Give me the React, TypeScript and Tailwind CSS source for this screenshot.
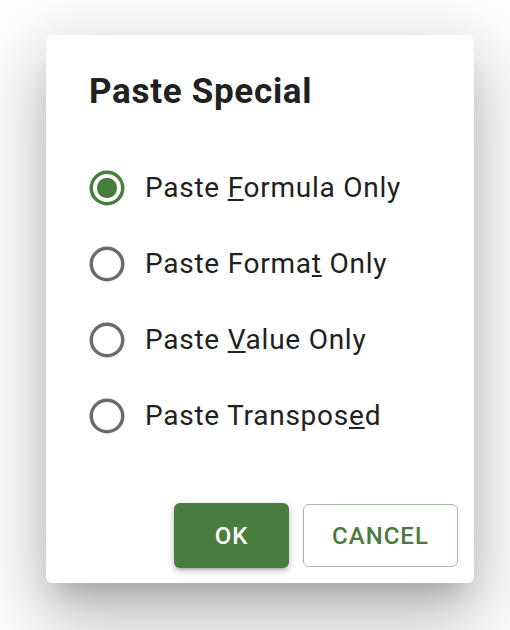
import React from "react";

const GREEN = "#477d3d";

function RadioIcon({ checked }: { checked: boolean }) {
  return (
    <svg width="42" height="42" viewBox="0 0 24 24" className="shrink-0">
      <circle cx="12" cy="12" r="9" fill="none" stroke={checked ? GREEN : "#6b6b6b"} strokeWidth="2" />
      {checked && <circle cx="12" cy="12" r="5.8" fill={GREEN} />}
    </svg>
  );
}

function U({ children }: { children: React.ReactNode }) {
  return <span className="underline decoration-[2px] underline-offset-[2px]">{children}</span>;
}

export default function App() {
  const rows: { node: React.ReactNode; checked: boolean }[] = [
    { node: <>Paste <U>F</U>ormula Only</>, checked: true },
    { node: <>Paste Forma<U>t</U> Only</>, checked: false },
    { node: <>Paste <U>V</U>alue Only</>, checked: false },
    { node: <>Paste Transpos<U>e</U>d</>, checked: false },
  ];
  return (
    <div
      className="w-[510px] h-[630px] bg-white pt-[35px] pl-[46px]"
      style={{ fontFamily: "Roboto, 'Liberation Sans', sans-serif" }}
    >
      <div className="w-[428px] h-[548px] rounded-[6px] bg-white flex flex-col shadow-[0_19px_26px_-12px_rgba(0,0,0,0.2),0_41px_65px_5px_rgba(0,0,0,0.14),0_15px_78px_14px_rgba(0,0,0,0.12)]">
        <div className="pt-[35px] pl-[43px] text-[35px] leading-[44px] font-bold tracking-[0.7px] text-[#212121]">
          Paste Special
        </div>
        <div className="mt-[36px] pl-[40px] flex flex-col">
          {rows.map((r, i) => (
            <div key={i} className="h-[76px] flex items-center gap-[17px]">
              <RadioIcon checked={r.checked} />
              <span className="text-[28px] tracking-[0.75px] text-[#212121] leading-none">{r.node}</span>
            </div>
          ))}
        </div>
        <div className="mt-auto pb-[15px] pr-[16px] flex justify-end items-center gap-[14px]">
          <button className="w-[115px] h-[65px] rounded-[6px] bg-[#477d3d] text-white text-[24px] font-medium tracking-[1px] shadow-[0_3px_3px_-2px_rgba(0,0,0,0.2),0_3px_7px_0_rgba(0,0,0,0.14),0_2px_9px_0_rgba(0,0,0,0.12)]">
            OK
          </button>
          <button className="w-[155px] h-[63px] rounded-[6px] bg-white border border-[#a3bf9e] text-[#477d3d] text-[24px] font-medium tracking-[1px]">
            CANCEL
          </button>
        </div>
      </div>
    </div>
  );
}
